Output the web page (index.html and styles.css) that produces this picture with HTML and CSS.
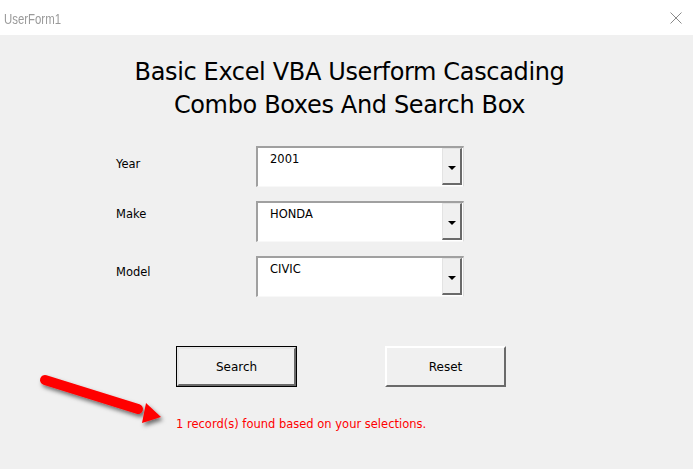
FILE: index.html
```html
<!DOCTYPE html>
<html>
<head>
<meta charset="utf-8">
<link rel="stylesheet" href="styles.css">
</head>
<body>
<div class="window">
  <div class="titlebar">
    <span class="caption">UserForm1</span>
    <svg class="close" width="12" height="12" viewBox="0 0 12 12"><path d="M0.5 0.5 L11.5 11.5 M11.5 0.5 L0.5 11.5" stroke="#8a8a8a" stroke-width="1" fill="none"/></svg>
  </div>
  <div class="client">
    <h1 class="heading">Basic Excel VBA Userform Cascading<br>Combo Boxes And Search Box</h1>
    <div class="form">
      <div class="label label-year">Year</div>
      <div class="combo"><span class="value">2001</span><span class="drop"><i class="tri"></i></span></div>
      <div class="label label-make">Make</div>
      <div class="combo"><span class="value">HONDA</span><span class="drop"><i class="tri"></i></span></div>
      <div class="label label-model">Model</div>
      <div class="combo"><span class="value">CIVIC</span><span class="drop"><i class="tri"></i></span></div>
    </div>
    <div class="buttons">
      <div class="btn btn-default"><span class="btn-face">Search</span></div>
      <div class="btn"><span class="btn-face">Reset</span></div>
    </div>
    <p class="status">1 record(s) found based on your selections.</p>
    <svg class="arrow" width="140" height="70" viewBox="0 0 140 70">
      <defs>
        <filter id="sh" x="-20%" y="-20%" width="140%" height="160%">
          <feDropShadow dx="2" dy="3" stdDeviation="2" flood-color="#000" flood-opacity="0.55"/>
        </filter>
      </defs>
      <g filter="url(#sh)">
        <line x1="15" y1="14" x2="108" y2="43" stroke="#ff0000" stroke-width="10" stroke-linecap="round"/>
        <polygon points="116,37 131,51 112,57" fill="#ff0000"/>
      </g>
    </svg>
  </div>
</div>
</body>
</html>
```
FILE: styles.css
```css
html, body {
  margin: 0;
  padding: 0;
  width: 693px;
  height: 469px;
  overflow: hidden;
  background: #f0f0f0;
}
.window {
  width: 693px;
  height: 469px;
  display: flex;
  flex-direction: column;
  font-family: "DejaVu Sans", sans-serif;
}
.titlebar {
  height: 35px;
  background: #ffffff;
  display: flex;
  align-items: center;
  justify-content: space-between;
  padding: 0 11px 0 4px;
  box-sizing: border-box;
}
.caption {
  font-family: "Liberation Sans", sans-serif;
  font-size: 15px;
  color: #9a9a9a;
  margin-top: 1px;
  transform: scaleX(0.76);
  transform-origin: left center;
}
.close {
  display: block;
}
.client {
  position: relative;
  flex: 1;
  background: #f0f0f0;
  padding: 21px 0 0 0;
}
.heading {
  margin: 0;
  text-align: center;
  font-family: "DejaVu Sans", sans-serif;
  font-weight: normal;
  font-size: 24px;
  line-height: 33px;
  letter-spacing: -0.35px;
  color: #000;
  padding-left: 6px;
}
.form {
  display: grid;
  grid-template-columns: 140px 208px;
  grid-auto-rows: 41px;
  row-gap: 14px;
  margin: 24px 0 0 116px;
}
.label {
  font-size: 11.5px;
  line-height: 13px;
  color: #000;
}
.label-year { padding-top: 12px; }
.label-make { padding-top: 7px; }
.label-model { padding-top: 10px; }
.combo {
  display: flex;
  background: #fff;
  border-top: 2px solid #a0a0a0;
  border-left: 2px solid #a0a0a0;
  border-right: 1px solid #dcdcdc;
  border-bottom: 1px solid #f8f8f8;
  box-sizing: border-box;
  height: 41px;
}
.value {
  flex: 1;
  font-size: 11.5px;
  line-height: 13px;
  padding: 5px 0 0 12px;
  color: #000;
}
.drop {
  width: 20px;
  margin: 0 1px 1px 0;
  box-sizing: border-box;
  background: #f0f0f0;
  border-top: 1px solid #e3e3e3;
  border-left: 1px solid #e3e3e3;
  border-right: 2px solid #6a6a6a;
  border-bottom: 2px solid #6a6a6a;
  display: flex;
  align-items: center;
  justify-content: center;
}
.tri {
  width: 0;
  height: 0;
  border-left: 4px solid transparent;
  border-right: 4px solid transparent;
  border-top: 4px solid #000;
  margin-top: 4px;
}
.buttons {
  display: flex;
  gap: 88px;
  margin: 49px 0 0 176px;
}
.btn {
  width: 121px;
  height: 41px;
  box-sizing: border-box;
  background: #f0f0f0;
  border-top: 2px solid #ffffff;
  border-left: 2px solid #ffffff;
  border-right: 2px solid #6a6a6a;
  border-bottom: 2px solid #6a6a6a;
  display: flex;
}
.btn-default {
  border: 1px solid #000;
}
.btn-face {
  flex: 1;
  display: flex;
  align-items: center;
  justify-content: center;
  font-size: 12px;
  color: #000;
}
.btn-default .btn-face {
  border-top: 2px solid #e6e6e6;
  border-left: 2px solid #e6e6e6;
  border-right: 2px solid #6a6a6a;
  border-bottom: 2px solid #6a6a6a;
}
.status {
  margin: 31px 0 0 176px;
  font-size: 11.5px;
  line-height: 13px;
  color: #ff0000;
}
.arrow {
  position: absolute;
  left: 30px;
  top: 331px;
}
```
